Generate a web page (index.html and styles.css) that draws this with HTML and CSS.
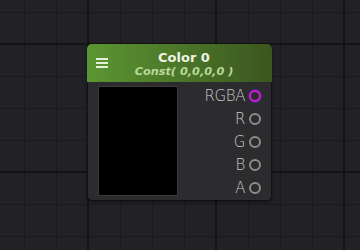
FILE: index.html
```html
<!DOCTYPE html>
<html lang="en">
<head>
    <meta charset="UTF-8">
    <title>Color Node</title>
    <link rel="stylesheet" href="styles.css">
</head>
<body>
    <!-- Graph canvas -->
    <div class="canvas">
        <div class="node">
            <div class="node-header">
                <span class="menu-icon">
                    <svg width="12" height="10" viewBox="0 0 12 10">
                        <rect x="0" y="0" width="12" height="2" fill="#e6f0d6"/>
                        <rect x="0" y="4" width="12" height="2" fill="#e6f0d6"/>
                        <rect x="0" y="8" width="12" height="2" fill="#e6f0d6"/>
                    </svg>
                </span>
                <div class="titles">
                    <div class="title">Color 0</div>
                    <div class="subtitle">Const( 0,0,0,0 )</div>
                </div>
            </div>
            <div class="node-body">
                <div class="preview"></div>
                <ul class="ports">
                    <li>RGBA <span class="port rgba"></span></li>
                    <li>R <span class="port"></span></li>
                    <li>G <span class="port"></span></li>
                    <li>B <span class="port"></span></li>
                    <li>A <span class="port"></span></li>
                </ul>
            </div>
        </div>
    </div>
</body>
</html>
```

FILE: styles.css
```css
* {
    margin: 0;
    padding: 0;
    box-sizing: border-box;
}

body {
    width: 360px;
    height: 250px;
    overflow: hidden;
    background-color: #222226;
    font-family: "DejaVu Sans", sans-serif;
}

/* Grid background */
.canvas {
    position: relative;
    width: 360px;
    height: 250px;
    background-color: #222226;
    background-image:
        linear-gradient(to right, #131315 0, #131315 2px, transparent 2px),
        linear-gradient(to bottom, #131315 0, #131315 2px, transparent 2px),
        linear-gradient(to right, #1a1a1d 0, #1a1a1d 1px, transparent 1px),
        linear-gradient(to bottom, #1a1a1d 0, #1a1a1d 1px, transparent 1px);
    background-size: 128px 128px, 128px 128px, 32px 32px, 32px 32px;
    background-position: 87px 43px, 87px 43px, 24px 12px, 24px 12px;
}

/* Node */
.node {
    position: absolute;
    left: 87px;
    top: 44px;
    width: 185px;
    height: 157px;
    background-color: #2c2c2f;
    border: 1px solid #121213;
    border-radius: 5px;
    box-shadow: 0 1px 3px rgba(0, 0, 0, 0.5);
}

.node-header {
    height: 38px;
    margin: -1px -1px 0 -1px;
    border-radius: 5px 5px 0 0;
    background: linear-gradient(to right, #5c9632, #3b561f);
    display: flex;
    align-items: center;
    padding-left: 9px;
}

.menu-icon {
    display: flex;
    width: 12px;
    height: 10px;
}

.titles {
    flex: 1;
    text-align: center;
    padding-right: 12px;
    padding-top: 1px;
}

.title {
    color: #eef3e4;
    font-weight: bold;
    font-size: 13px;
    line-height: 15px;
}

.subtitle {
    color: #b9d99a;
    font-weight: bold;
    font-style: italic;
    font-size: 11.3px;
    line-height: 13px;
}

.node-body {
    display: flex;
    justify-content: space-between;
    padding: 4px 10px 0 10px;
}

.preview {
    width: 80px;
    height: 110px;
    background-color: #000;
    border: 1px solid #3a3a3d;
}

.ports {
    list-style: none;
    display: flex;
    flex-direction: column;
    align-items: flex-end;
    margin-top: -1px;
}

.ports li {
    display: flex;
    align-items: center;
    height: 22.8px;
    color: #cacaca;
    font-family: "DejaVu Sans", sans-serif;
    font-weight: 200;
    font-size: 15px;
    letter-spacing: -0.4px;
}

.port {
    display: inline-block;
    width: 12px;
    height: 12px;
    margin-left: 4px;
    border-radius: 50%;
    border: 2px solid #8c8c8c;
}

.port.rgba {
    border: 2.5px solid #d81ed8;
    box-shadow: 0 0 0 1.5px #3a2a6a;
}
```
